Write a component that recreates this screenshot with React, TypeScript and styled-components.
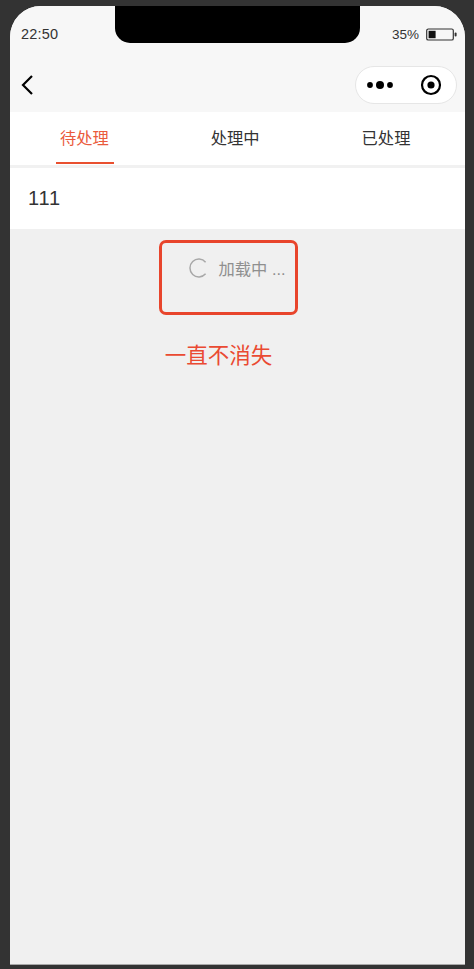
import { FC } from 'react'
import styled, { createGlobalStyle } from 'styled-components'

const GlobalStyle = createGlobalStyle`
	html, body {
		margin: 0;
		padding: 0;
		background: #333333;
	}
	body {
		font-family: 'Liberation Sans', 'Noto Sans CJK SC', sans-serif;
	}
`

const Stage = styled.div`
	box-sizing: border-box;
	width: 474px;
	height: 969px;
	padding: 6px 9px 4px 10px;
	background: #333333;
`

const Phone = styled.div`
	position: relative;
	display: flex;
	flex-direction: column;
	box-sizing: border-box;
	height: 100%;
	overflow: hidden;
	border-bottom: 1px solid #a8a8a8;
	border-radius: 31px 31px 0 0;
	background: #f0f0f0;
`

const Notch = styled.div`
	position: absolute;
	top: 0;
	left: 105px;
	width: 245px;
	height: 37px;
	background: #000000;
	border-radius: 0 0 15px 15px;
`

const TopBar = styled.header`
	display: flex;
	flex-direction: column;
	height: 106px;
	background: #f7f7f7;
`

const StatusBar = styled.div`
	display: flex;
	align-items: center;
	justify-content: space-between;
	height: 44px;
	padding: 12px 8px 0 11px;
	box-sizing: border-box;
	color: #333333;
	font-size: 14.5px;
`

const Clock = styled.span`
	letter-spacing: 0.2px;
`

const BatteryGroup = styled.div`
	display: flex;
	align-items: center;
	gap: 7px;
	margin-top: 1px;
	font-size: 13.5px;
`

const NavBar = styled.nav`
	display: flex;
	align-items: center;
	justify-content: space-between;
	height: 62px;
	padding: 8px 8px 0 10px;
	box-sizing: border-box;
`

const Capsule = styled.div`
	display: flex;
	align-items: center;
	justify-content: space-between;
	box-sizing: border-box;
	width: 102px;
	height: 38px;
	padding: 0 14px 0 11px;
	background: #ffffff;
	border: 1px solid #e6e6e6;
	border-radius: 19px;
`

const Tabs = styled.div`
	display: grid;
	grid-template-columns: repeat(3, 150.8px);
	height: 53px;
	margin-left: -1px;
	background: #ffffff;
`

const Tab = styled.div<{ $active?: boolean }>`
	position: relative;
	display: flex;
	align-items: center;
	justify-content: center;
	padding-bottom: 4px;
	font-size: 16.3px;
	color: ${(props) => (props.$active ? '#ea5a3c' : '#333333')};
`

const TabMarker = styled.span`
	position: absolute;
	bottom: 1px;
	left: 47px;
	width: 58px;
	height: 2px;
	background: #e9502f;
`

const Divider = styled.div`
	height: 3px;
	background: #f1f1f1;
`

const ListRow = styled.div`
	display: flex;
	align-items: center;
	height: 61px;
	padding-left: 18px;
	background: #ffffff;
	color: #333333;
	font-size: 20px;
	letter-spacing: 0.8px;
`

const Content = styled.main`
	display: flex;
	flex-direction: column;
	align-items: center;
	flex: 1;
	padding-top: 11px;
`

const MarkBox = styled.div`
	box-sizing: border-box;
	display: flex;
	align-items: flex-start;
	justify-content: flex-end;
	gap: 10px;
	width: 139px;
	height: 75px;
	margin-left: -19px;
	padding: 15px 9px 0 0;
	border: 3px solid #e8452c;
	border-radius: 7px;
`

const LoadingText = styled.span`
	color: #8f8f8f;
	font-size: 16.3px;
	line-height: 22px;
`

const Annotation = styled.div`
	margin-top: 28px;
	margin-left: -38px;
	color: #ea4a32;
	font-size: 21.5px;
	line-height: 26px;
`

const Battery: FC = () => (
	<svg width="31" height="13" viewBox="0 0 31 13">
		<rect x="0.7" y="1" width="26.6" height="11" rx="1.6" fill="none" stroke="#333333" strokeWidth="1.2" />
		<rect x="2.6" y="2.8" width="7" height="7.4" fill="#111111" />
		<rect x="28.6" y="4.5" width="2" height="4" rx="1" fill="#333333" />
	</svg>
)

const BackIcon: FC = () => (
	<svg width="14" height="22" viewBox="0 0 14 22">
		<path d="M12 2 L3 11 L12 20" fill="none" stroke="#000000" strokeWidth="2.2" />
	</svg>
)

const MoreIcon: FC = () => (
	<svg width="26" height="10" viewBox="0 0 26 10">
		<circle cx="3" cy="5" r="2.9" fill="#000000" />
		<circle cx="13" cy="5" r="4" fill="#000000" />
		<circle cx="23" cy="5" r="2.9" fill="#000000" />
	</svg>
)

const TargetIcon: FC = () => (
	<svg width="22" height="22" viewBox="0 0 22 22">
		<circle cx="11" cy="11" r="9" fill="none" stroke="#000000" strokeWidth="2.2" />
		<circle cx="11" cy="11" r="3.6" fill="#000000" />
	</svg>
)

const Spinner: FC = () => (
	<svg width="20" height="20" viewBox="0 0 20 20">
		<path d="M16.6 4.2 A8.9 8.9 0 1 0 16.6 15.8" fill="none" stroke="#a8a8a8" strokeWidth="1.5" />
	</svg>
)

const App: FC = () => {
	return (
		<Stage>
			<GlobalStyle />
			<Phone>
				<Notch />
				<TopBar>
					<StatusBar>
						<Clock>22:50</Clock>
						<BatteryGroup>
							35%
							<Battery />
						</BatteryGroup>
					</StatusBar>
					<NavBar>
						<BackIcon />
						<Capsule>
							<MoreIcon />
							<TargetIcon />
						</Capsule>
					</NavBar>
				</TopBar>
				<Tabs>
					<Tab $active>
						待处理
						<TabMarker />
					</Tab>
					<Tab>处理中</Tab>
					<Tab>已处理</Tab>
				</Tabs>
				<Divider />
				<ListRow>111</ListRow>
				<Content>
					<MarkBox>
						<Spinner />
						<LoadingText>加载中 ...</LoadingText>
					</MarkBox>
					<Annotation>一直不消失</Annotation>
				</Content>
			</Phone>
		</Stage>
	)
}

export default App
